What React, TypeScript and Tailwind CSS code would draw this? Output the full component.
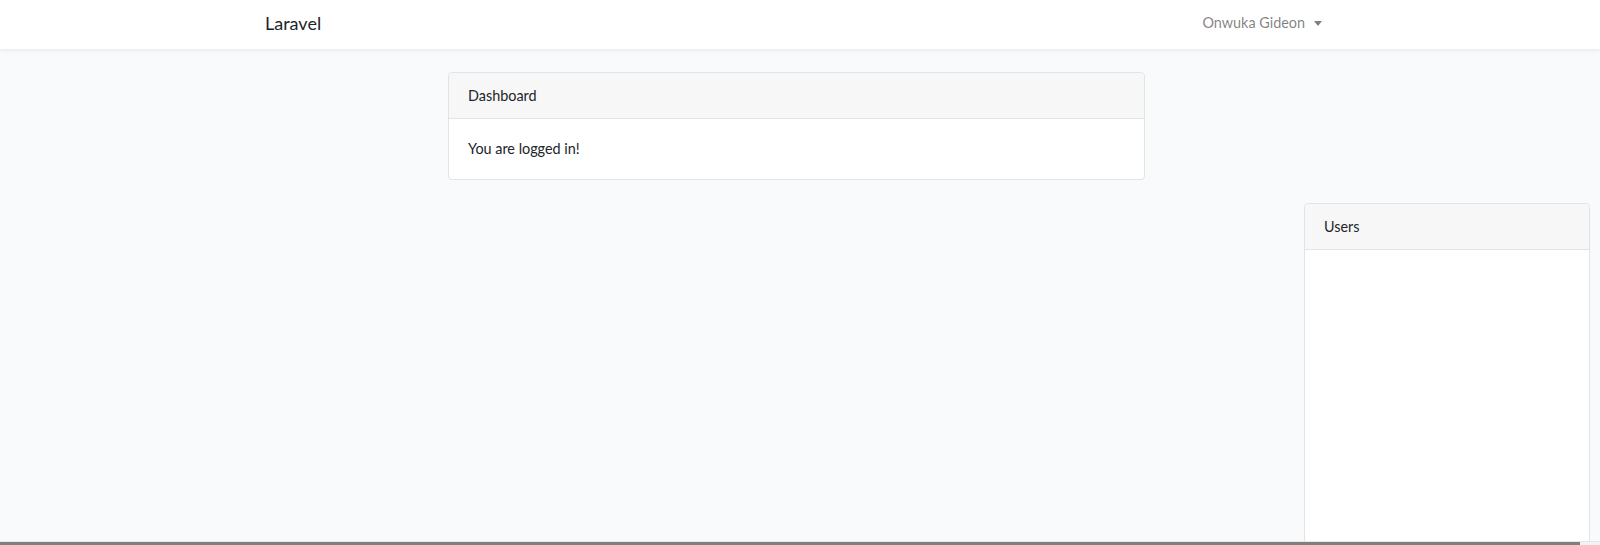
import React from "react";

export default function App() {
  const font = { fontFamily: "Lato, 'Noto Sans', sans-serif" };
  return (
    <div
      className="relative h-[545px] w-[1600px] overflow-hidden bg-[#f8fafc] text-[14.4px] leading-[21.6px] text-[#212529]"
      style={font}
    >
      <nav className="relative z-10 flex h-[49px] items-center bg-white pb-[3px] shadow-[0_2px_4px_rgba(0,0,0,0.06)]">
        <div className="flex w-full items-center justify-between pl-[265px] pr-[278px]">
          <a className="text-[18px] leading-[27px] text-[#212529]">Laravel</a>
          <button className="flex items-center gap-[9px] text-[14.4px] text-[rgba(0,0,0,0.5)]">
            <span>Onwuka Gideon</span>
            <span className="mt-[1px] h-0 w-0 border-x-[4.5px] border-t-[5px] border-x-transparent border-t-[rgba(0,0,0,0.5)]" />
          </button>
        </div>
      </nav>
      <main className="flex flex-col pt-[23px]">
        <div className="ml-[448px] w-[697px] rounded-[4px] border border-[#e3e3e3] bg-white">
          <div className="rounded-t-[4px] border-b border-[#e3e3e3] bg-[#f7f7f7] px-[19px] py-[11.5px]">
            Dashboard
          </div>
          <div className="px-[19px] py-[19.5px]">You are logged in!</div>
        </div>
        <div className="mt-[23px] flex justify-end pr-[10px]">
          <div className="w-[286px] rounded-[4px] border border-[#e3e3e3] bg-white">
            <div className="rounded-t-[4px] border-b border-[#e3e3e3] bg-[#f7f7f7] px-[19px] py-[11.5px]">
              Users
            </div>
            <div className="h-[400px]" />
          </div>
        </div>
      </main>
      <div className="absolute bottom-0 left-0 right-0 h-[4px] border-t border-[#e6e6e6] bg-[#f3f3f3]">
        <div className="h-[3px] w-[1580px] bg-[#7f7f7f]" />
      </div>
    </div>
  );
}
